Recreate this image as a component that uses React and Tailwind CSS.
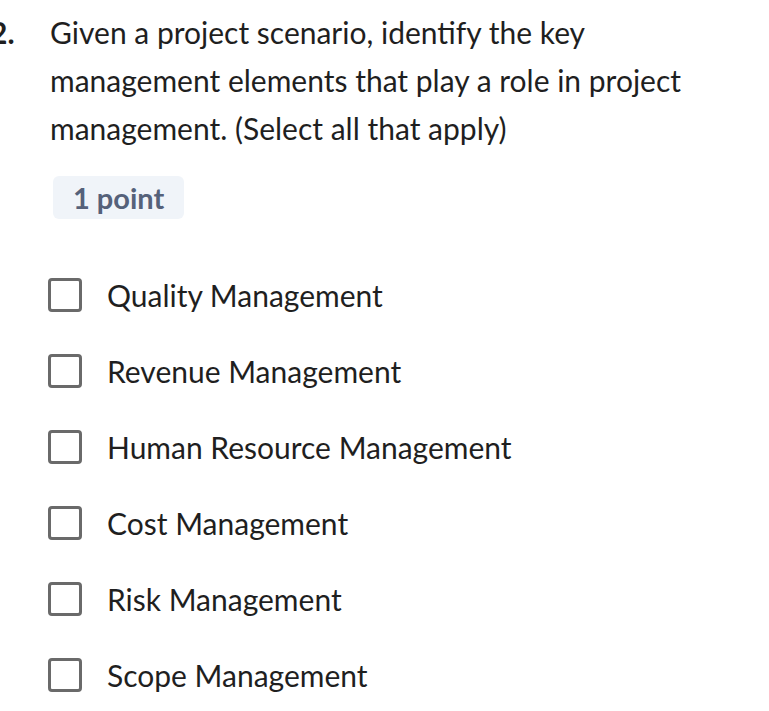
import React from 'react';

const opcoes = [
  'Quality Management',
  'Revenue Management',
  'Human Resource Management',
  'Cost Management',
  'Risk Management',
  'Scope Management',
];

function Opcao({ texto }) {
  return (
    <label className="flex items-center h-[76px]">
      <span className="w-[34px] h-[34px] border-[3px] border-[#6a6a6a] rounded-[4px] bg-white shrink-0" />
      <span className="ml-[25px] text-[30px] text-[#1f1f1f]">{texto}</span>
    </label>
  );
}

export default function App() {
  return (
    <div className="w-[769px] h-[711px] bg-white overflow-hidden relative" style={{ fontFamily: 'Lato, "Open Sans", sans-serif' }}>
      <div className="flex pt-[8px]">
        <div className="w-[60px] shrink-0 -ml-[10px] text-[30px] font-bold text-[#1f1f1f] leading-[48px]">2.</div>
        <div className="w-[684px]">
          <p className="text-[30px] leading-[48px] text-[#1f1f1f]">
            Given a project scenario, identify the key management elements that play a role in project management. (Select all that apply)
          </p>
          <div className="mt-[24px] ml-[3px] inline-flex items-center h-[43px] px-[20px] rounded-[6px] bg-[#f0f4f9] text-[29px] font-bold text-[#55617a]">
            1 point
          </div>
          <div className="mt-[38px] -ml-[2px] flex flex-col">
            {opcoes.map((o) => (
              <Opcao key={o} texto={o} />
            ))}
          </div>
        </div>
      </div>
    </div>
  );
}
